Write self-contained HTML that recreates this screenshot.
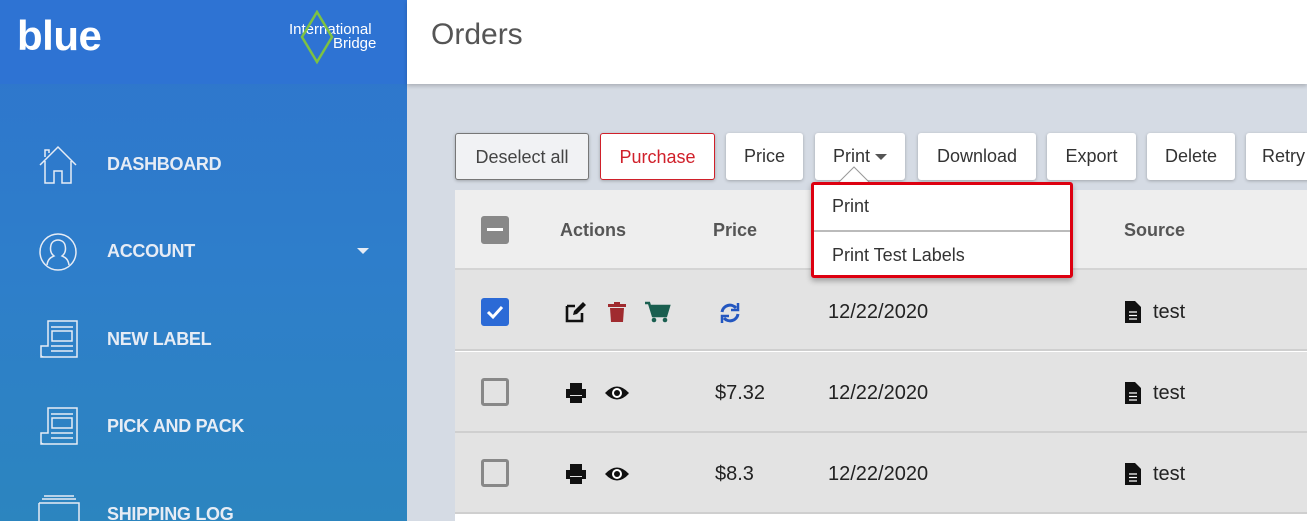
<!DOCTYPE html>
<html><head><style>
*{margin:0;padding:0;box-sizing:border-box}
html,body{width:1307px;height:521px;overflow:hidden}
body{font-family:"Liberation Sans",Arial,sans-serif;background:#d5dbe4;position:relative}
.side{position:absolute;left:0;top:0;width:407px;height:521px;background:linear-gradient(180deg,#2f74cc 0%,#2e7ecb 50%,#2c85bf 100%)}
.sh{position:absolute;left:0;top:0;width:407px;height:84px;background:#2e73d3}
.logo{position:absolute;left:17px;top:12px;color:#fff;font-size:42px;font-weight:bold;letter-spacing:-0.5px}
.nav{position:absolute;left:107px;color:#e6ecf5;font-weight:bold;font-size:18px;letter-spacing:-0.3px}
.ic{position:absolute;left:38px}
.top{position:absolute;left:407px;top:0;width:900px;height:84px;background:#fff;box-shadow:0 2px 4px rgba(0,0,0,.2)}
.top h1{position:absolute;left:24px;top:18px;font-weight:normal;font-size:30px;color:#555}
.btn{position:absolute;top:133px;height:47px;background:#fff;border-radius:3px;box-shadow:0 1px 3px rgba(0,0,0,.25);font-size:18px;color:#333;text-align:center;line-height:47px}
.tbl{position:absolute;left:455px;top:190px;width:852px;height:331px;background:#fff}
.hd{position:absolute;left:0;top:0;width:852px;height:80px;background:#eee;border-bottom:2px solid #d4d4d4}
.row{position:absolute;left:0;width:852px;height:81px;background:#e3e3e3;border-bottom:2px solid #cfcfcf}
.th{position:absolute;top:30px;font-weight:bold;font-size:18px;color:#555}
.td{position:absolute;font-size:20px;color:#222}
.cb{position:absolute;left:26px;width:28px;height:28px;border:3px solid #888;border-radius:3px}
</style></head><body>
<div class="side">
<div class="sh"></div>
<div class="logo">blue</div>
<div style="position:absolute;left:289px;top:23px;color:#fff;font-size:15px;line-height:14px">International<br><span style="padding-left:44px">Bridge</span></div>
<svg style="position:absolute;left:300px;top:10px" width="34" height="55"><path d="M17 2 L32 27 L17 52 L2 27 Z" fill="none" stroke="#7dc242" stroke-width="2.5"/></svg>
<svg class="ic" style="top:145px" width="40" height="40" fill="none" stroke="#e6ecf5" stroke-width="1.5"><path d="M2 20 L20 2 L38 20 M7 16 V38 H16 V26 H24 V38 H33 V16 M7 12 V5 H11 V8"/></svg>
<div class="nav" style="top:154px">DASHBOARD</div>
<svg class="ic" style="top:232px" width="40" height="40" fill="none" stroke="#e6ecf5" stroke-width="1.5"><circle cx="20" cy="20" r="18"/><path d="M9 33 C10 26 14 25 16 24 C12 21 12 17 13 13 C14 9 18 8 20 8 C22 8 26 9 27 13 C28 17 28 21 24 24 C26 25 30 26 31 33"/></svg>
<div class="nav" style="top:241px">ACCOUNT</div>
<div style="position:absolute;left:357px;top:248px;border-left:6px solid transparent;border-right:6px solid transparent;border-top:6px solid #e6ecf5"></div>
<svg class="ic" style="top:319px" width="40" height="40" fill="none" stroke="#e6ecf5" stroke-width="1.5"><path d="M10 2 H39 V38 H3 V27 H10 Z M3 27 V36 Q3 38 6 38 M13 8 H35 M14 12 H34 V22 H14 Z M13 27 H35 M13 32 H35"/></svg>
<div class="nav" style="top:329px">NEW LABEL</div>
<svg class="ic" style="top:406px" width="40" height="40" fill="none" stroke="#e6ecf5" stroke-width="1.5"><path d="M10 2 H39 V38 H3 V27 H10 Z M3 27 V36 Q3 38 6 38 M13 8 H35 M14 12 H34 V22 H14 Z M13 27 H35 M13 32 H35"/></svg>
<div class="nav" style="top:416px">PICK AND PACK</div>
<svg class="ic" style="top:494px" width="42" height="30" fill="none" stroke="#e6ecf5" stroke-width="1.5"><path d="M6 2 H36 M4 5 H38 M1 9 H41 V30 M1 9 V30"/></svg>
<div class="nav" style="top:504px">SHIPPING LOG</div>
</div>
<div class="top"><h1>Orders</h1></div>
<div class="btn" style="left:455px;width:134px;background:#f1f2f4;border:1px solid #777;color:#444">Deselect all</div>
<div class="btn" style="left:600px;width:115px;border:1px solid #d0202a;color:#d0202a">Purchase</div>
<div class="btn" style="left:726px;width:77px">Price</div>
<div class="btn" style="left:815px;width:90px">Print <span style="display:inline-block;border-left:6px solid transparent;border-right:6px solid transparent;border-top:6px solid #555;vertical-align:middle"></span></div>
<div class="btn" style="left:918px;width:118px">Download</div>
<div class="btn" style="left:1047px;width:89px">Export</div>
<div class="btn" style="left:1147px;width:88px">Delete</div>
<div class="btn" style="left:1246px;width:80px;text-align:left;padding-left:16px">Retry</div>
<div class="tbl">
<div class="hd">
<div class="cb" style="top:26px;background:#888;border-color:#888"><div style="position:absolute;left:3px;top:9px;width:16px;height:3px;background:#fff"></div></div>
<div class="th" style="left:105px">Actions</div>
<div class="th" style="left:258px">Price</div>
<div class="th" style="left:669px">Source</div>
</div>
<div class="row" style="top:80px">
<div class="cb" style="top:28px;background:#2b6ad6;border-color:#2b6ad6"><svg width="22" height="22"><path d="M4 11 L9 16 L18 6" stroke="#fff" stroke-width="3" fill="none"/></svg></div>
<svg style="position:absolute;left:110px;top:31px" width="22" height="22"><path d="M2 5 H10 M2 5 V20 H17 V12" stroke="#111" stroke-width="2.6" fill="none"/><path d="M8 14 L9 10 L18 1 L21 4 L12 13 Z" fill="#111"/></svg>
<svg style="position:absolute;left:152px;top:31px" width="20" height="22"><rect x="1" y="3" width="18" height="3" fill="#a02b2f"/><rect x="7" y="1" width="6" height="3" fill="#a02b2f"/><path d="M3 7 H17 L16 21 H4 Z" fill="#a02b2f"/></svg>
<svg style="position:absolute;left:190px;top:31px" width="26" height="22"><path d="M0 2 H4 L8 15 H21 L24 5 H6" fill="none" stroke="#1a5f50" stroke-width="2.5"/><path d="M6 5 H24 L21 14 H8 Z" fill="#1a5f50"/><circle cx="9" cy="19" r="2.3" fill="#1a5f50"/><circle cx="20" cy="19" r="2.3" fill="#1a5f50"/></svg>
<svg style="position:absolute;left:264px;top:32px" width="22" height="22" fill="none" stroke="#2457c0" stroke-width="3"><path d="M3 10 A8 8 0 0 1 17 6 M19 12 A8 8 0 0 1 5 16"/><path d="M19 1 V8 H12 M3 21 V14 H10" stroke-width="2.5"/></svg>
<div class="td" style="left:373px;top:31px">12/22/2020</div>
<svg style="position:absolute;left:670px;top:31px" width="16" height="22"><path d="M0 0 H10 L16 6 V22 H0 Z" fill="#111"/><path d="M4 11 H12 M4 14.5 H12 M4 18 H12" stroke="#fff" stroke-width="1.3"/></svg>
<div class="td" style="left:698px;top:31px">test</div>
</div>
<div class="row" style="top:162px">
<div class="cb" style="top:26px"></div>
<svg style="position:absolute;left:110px;top:31px" width="22" height="20"><path d="M5 0 H17 V6 H5 Z M1 6 H21 V15 H17 V12 H5 V15 H1 Z M5 13 H17 V20 H5 Z" fill="#111"/></svg>
<svg style="position:absolute;left:149px;top:32px" width="26" height="18"><path d="M1 9 Q13 -4 25 9 Q13 22 1 9 Z" fill="#111"/><circle cx="13" cy="9" r="5" fill="#fff"/><circle cx="13" cy="9" r="3" fill="#111"/></svg>
<div class="td" style="left:260px;top:30px">$7.32</div>
<div class="td" style="left:373px;top:30px">12/22/2020</div>
<svg style="position:absolute;left:670px;top:30px" width="16" height="22"><path d="M0 0 H10 L16 6 V22 H0 Z" fill="#111"/><path d="M4 11 H12 M4 14.5 H12 M4 18 H12" stroke="#fff" stroke-width="1.3"/></svg>
<div class="td" style="left:698px;top:30px">test</div>
</div>
<div class="row" style="top:243px">
<div class="cb" style="top:26px"></div>
<svg style="position:absolute;left:110px;top:31px" width="22" height="20"><path d="M5 0 H17 V6 H5 Z M1 6 H21 V15 H17 V12 H5 V15 H1 Z M5 13 H17 V20 H5 Z" fill="#111"/></svg>
<svg style="position:absolute;left:149px;top:32px" width="26" height="18"><path d="M1 9 Q13 -4 25 9 Q13 22 1 9 Z" fill="#111"/><circle cx="13" cy="9" r="5" fill="#fff"/><circle cx="13" cy="9" r="3" fill="#111"/></svg>
<div class="td" style="left:260px;top:30px">$8.3</div>
<div class="td" style="left:373px;top:30px">12/22/2020</div>
<svg style="position:absolute;left:670px;top:30px" width="16" height="22"><path d="M0 0 H10 L16 6 V22 H0 Z" fill="#111"/><path d="M4 11 H12 M4 14.5 H12 M4 18 H12" stroke="#fff" stroke-width="1.3"/></svg>
<div class="td" style="left:698px;top:30px">test</div>
</div>
</div>
<svg style="position:absolute;left:837px;top:166px" width="34" height="18"><path d="M0 18 L17 1 L34 18" fill="#fff" stroke="#999" stroke-width="1"/></svg>
<div style="position:absolute;left:811px;top:182px;width:262px;height:96px;border:3px solid #dd0010;border-radius:3px;background:#fff;box-shadow:0 3px 6px rgba(0,0,0,.3)">
<div style="position:absolute;left:18px;top:11px;font-size:18px;color:#333">Print</div>
<div style="position:absolute;left:0;top:45px;width:256px;height:2px;background:#bbb"></div>
<div style="position:absolute;left:18px;top:60px;font-size:18px;color:#333">Print Test Labels</div>
</div>
</body></html>
